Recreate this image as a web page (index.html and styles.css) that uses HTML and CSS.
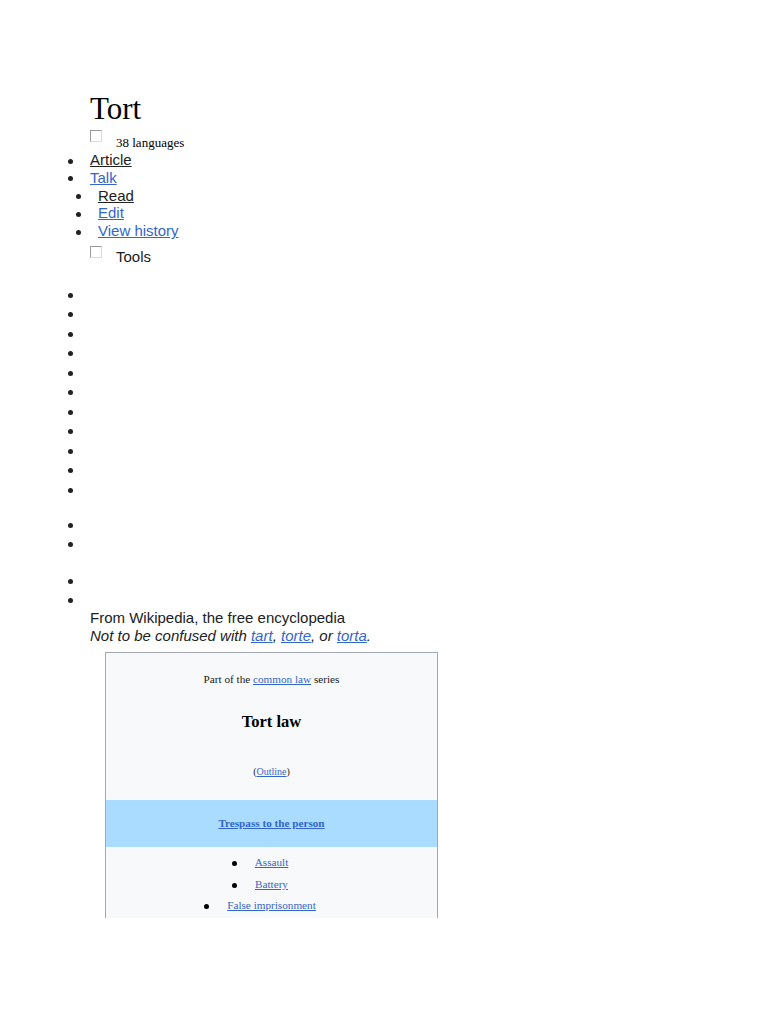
FILE: index.html
```html
<!DOCTYPE html>
<html lang="en">
<head>
<meta charset="utf-8">
<title>Tort - Wikipedia</title>
<link rel="stylesheet" href="styles.css">
</head>
<body>
<div class="page">
  <h1 class="title">Tort</h1>
  <div class="toggle-row lang-row">
    <input type="checkbox" class="toggle">
    <span class="lang-label">38 languages</span>
  </div>
  <ul class="tabs">
    <li><a class="dark" href="#">Article</a></li>
    <li><a href="#">Talk</a></li>
  </ul>
  <ul class="tabs views">
    <li><a class="dark" href="#">Read</a></li>
    <li><a href="#">Edit</a></li>
    <li><a href="#">View history</a></li>
  </ul>
  <div class="toggle-row tools-row">
    <input type="checkbox" class="toggle">
    <span class="tools-label">Tools</span>
  </div>
  <ul class="empty first">
    <li></li><li></li><li></li><li></li><li></li><li></li><li></li><li></li><li></li><li></li><li></li>
  </ul>
  <ul class="empty second">
    <li></li><li></li>
  </ul>
  <ul class="empty third">
    <li></li><li></li>
  </ul>
  <div class="tagline">From Wikipedia, the free encyclopedia</div>
  <div class="hatnote">Not to be confused with <a href="#">tart</a>, <a href="#">torte</a>, or <a href="#">torta</a>.</div>
  <div class="sidebar">
    <div class="sb-pretitle">Part of the <a href="#">common law</a> series</div>
    <div class="sb-title">Tort law</div>
    <div class="sb-outline">(<a href="#">Outline</a>)</div>
    <div class="sb-heading"><a href="#">Trespass to the person</a></div>
    <ul class="sb-list">
      <li><a href="#">Assault</a></li>
      <li><a href="#">Battery</a></li>
      <li><a href="#">False imprisonment</a></li>
    </ul>
  </div>
</div>
</body>
</html>
```
FILE: styles.css
```css
html, body {
  margin: 0;
  padding: 0;
  background: #ffffff;
}
body {
  font-family: "Liberation Sans", Arial, sans-serif;
  font-size: 15px;
  color: #202122;
}
a {
  color: #3366cc;
  text-decoration: underline;
}
a.dark {
  color: #202122;
}
ul {
  list-style: none;
  margin: 0;
  padding: 0;
}
.page {
  padding: 91px 0 0 90px;
}
.title {
  margin: 0;
  padding-top: 1px;
  font-family: "Liberation Serif", "Times New Roman", serif;
  font-size: 31px;
  line-height: 33px;
  font-weight: normal;
  color: #000;
}
.toggle-row {
  display: flex;
  align-items: flex-start;
}
.toggle {
  -webkit-appearance: none;
  appearance: none;
  margin: 0;
  width: 12px;
  height: 12px;
  box-sizing: border-box;
  border: 1px solid;
  border-color: #9a9a9a #dcdcdc #dcdcdc #9a9a9a;
  background: #ffffff;
  border-radius: 0;
}
.lang-row {
  height: 26px;
}
.lang-row .toggle {
  margin-top: 5px;
}
.lang-label {
  font-family: "Liberation Serif", "Times New Roman", serif;
  font-size: 13px;
  line-height: 15px;
  margin-top: 10px;
  margin-left: 14px;
  color: #000;
}
.tabs li,
.empty li {
  line-height: 17.8px;
}
.tabs li::before,
.empty li::before {
  content: "";
  display: inline-block;
  width: 5px;
  height: 5px;
  border-radius: 50%;
  background: #202122;
  vertical-align: middle;
  margin-left: -22.5px;
  margin-right: 17.5px;
}
.views {
  padding-left: 8px;
}
.tools-row {
  margin-top: 2.5px;
}
.tools-row .toggle {
  margin-top: 4px;
}
.tools-label {
  margin-top: 6px;
  margin-left: 14px;
  line-height: 18px;
}
.empty li {
  height: 19.5px;
  line-height: 19.5px;
}
.empty.first {
  margin-top: 17.5px;
}
.empty.second {
  margin-top: 15.5px;
}
.empty.third {
  margin-top: 17px;
}
.tagline {
  line-height: 18px;
}
.hatnote {
  line-height: 18px;
  font-style: italic;
}
.sidebar {
  margin: 7.5px 0 0 15px;
  width: 331px;
  height: 265px;
  overflow: hidden;
  border: 1px solid #a2a9b1;
  border-bottom: none;
  background: #f8f9fa;
  font-family: "Liberation Serif", "Times New Roman", serif;
  color: #202122;
  text-align: center;
}
.sb-pretitle {
  font-size: 11.2px;
  line-height: 14px;
  padding-top: 19px;
}
.sb-title {
  font-size: 16.5px;
  font-weight: bold;
  line-height: 20px;
  margin-top: 26px;
  color: #000;
}
.sb-outline {
  font-size: 10px;
  line-height: 14px;
  margin-top: 33px;
  padding-bottom: 21px;
}
.sb-heading {
  background: #a9dcff;
  height: 47px;
  line-height: 47px;
  font-size: 11.2px;
  font-weight: bold;
}
.sb-list {
  padding-top: 5px;
  font-size: 11.2px;
  line-height: 21.5px;
}
.sb-list li::before {
  content: "";
  display: inline-block;
  width: 5px;
  height: 5px;
  border-radius: 50%;
  background: #000;
  vertical-align: middle;
  margin-left: -23px;
  margin-right: 18px;
}
```
